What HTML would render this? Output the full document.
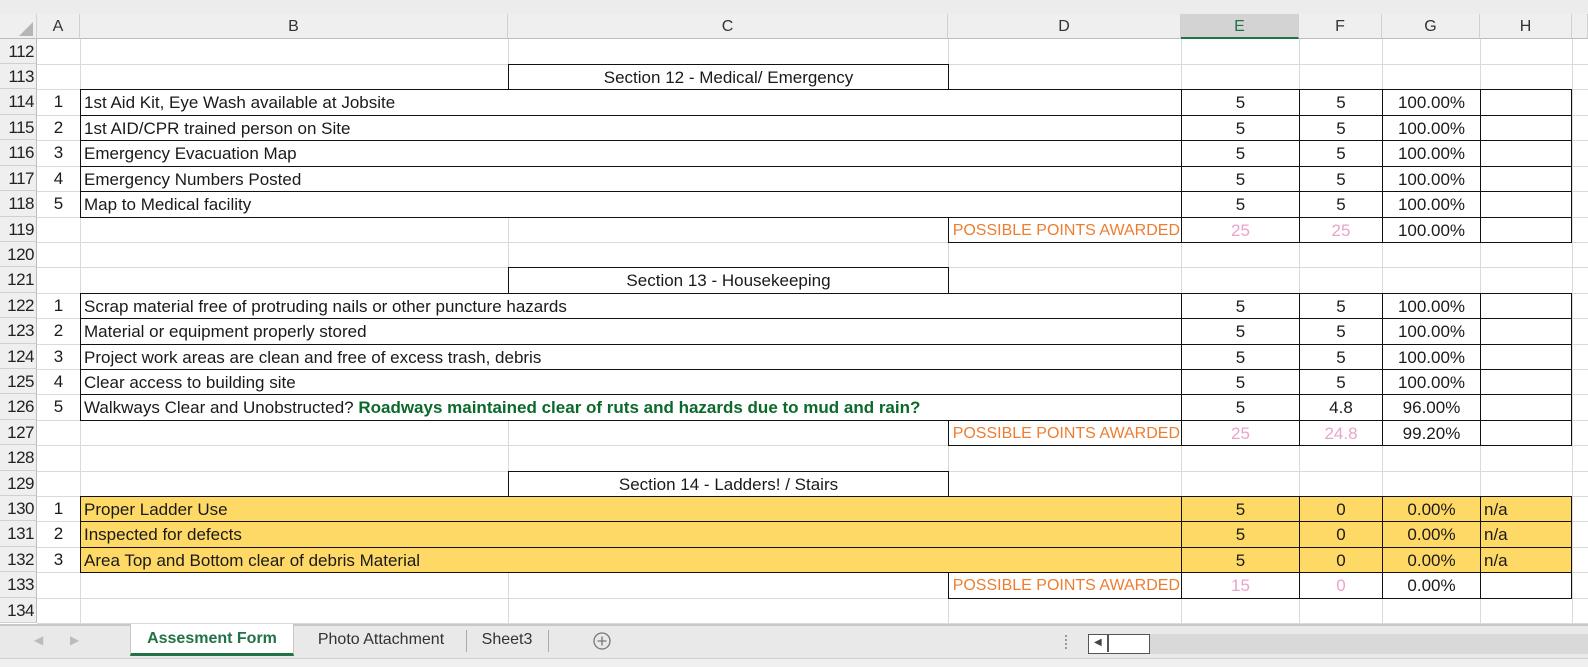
<!DOCTYPE html>
<html><head><meta charset="utf-8"><style>
*{margin:0;padding:0;box-sizing:border-box}
body{width:1588px;height:667px;overflow:hidden;background:#fff;font-family:"Liberation Sans",Arial,sans-serif;position:relative;color:#1a1a1a}
.top{position:absolute;left:0;top:0;width:1588px;height:14px;background:#ececec}
.hdr{position:absolute;top:14px;height:25px;background:#efefef;border-right:1px solid #d0d0d0;border-bottom:1px solid #bdbdbd;text-align:center;font-size:16px;line-height:25px;color:#333}
.rh{position:absolute;left:0;width:37px;background:#efefef;border-right:1px solid #bdbdbd;border-bottom:1px solid #d0d0d0;font-size:17px;line-height:26px;text-align:right;padding-right:2px;color:#222;letter-spacing:-0.5px}
.gl{position:absolute;top:39px;height:584px;width:1px;background:#dadada}
.hl{position:absolute;left:37px;width:1551px;height:1px;background:#dadada}
.c{position:absolute;font-size:17px;line-height:26px;white-space:nowrap;overflow:hidden}
.b{border:1.5px solid #111;background:#fff}
.ctr{text-align:center}
.or{color:#ed7d31;text-align:right;padding-right:1px;font-size:16px}
.pk{color:#eba3c9;text-align:center}
.y{background:#ffd966}
.g{color:#0b6a2a;font-weight:bold}
.tabbar{position:absolute;left:0;top:624px;width:1588px;height:34px;background:#e9e9e9;border-top:2px solid #c8c8c8}
.bot{position:absolute;left:0;top:658px;width:1588px;height:9px;background:#f0f0f0;border-top:1px solid #d0d0d0}
</style></head><body>
<div class="top"></div>
<div class="hdr" style="left:0;width:37px"><svg width="14" height="14" style="position:absolute;left:19px;top:8px"><polygon points="14,0 14,14 0,14" fill="#b5b5b5"/></svg></div>
<div class="hdr" style="left:37px;width:43px">A</div>
<div class="hdr" style="left:80px;width:428px">B</div>
<div class="hdr" style="left:508px;width:440px">C</div>
<div class="hdr" style="left:948px;width:233px">D</div>
<div class="hdr" style="left:1181px;width:118px;background:#d3d3d3;border-bottom:2px solid #217346;color:#217346">E</div>
<div class="hdr" style="left:1299px;width:83px">F</div>
<div class="hdr" style="left:1382px;width:98px">G</div>
<div class="hdr" style="left:1480px;width:92px">H</div>
<div class="hdr" style="left:1572px;width:16px"></div>

<div class="gl" style="left:80px"></div><div class="gl" style="left:508px"></div><div class="gl" style="left:948px"></div><div class="gl" style="left:1181px"></div><div class="gl" style="left:1299px"></div><div class="gl" style="left:1382px"></div><div class="gl" style="left:1480px"></div><div class="gl" style="left:1572px"></div>
<div class="hl" style="top:64px"></div><div class="hl" style="top:89px"></div><div class="hl" style="top:115px"></div><div class="hl" style="top:140px"></div><div class="hl" style="top:166px"></div><div class="hl" style="top:191px"></div><div class="hl" style="top:217px"></div><div class="hl" style="top:242px"></div><div class="hl" style="top:267px"></div><div class="hl" style="top:293px"></div><div class="hl" style="top:318px"></div><div class="hl" style="top:344px"></div><div class="hl" style="top:369px"></div><div class="hl" style="top:394px"></div><div class="hl" style="top:420px"></div><div class="hl" style="top:445px"></div><div class="hl" style="top:471px"></div><div class="hl" style="top:496px"></div><div class="hl" style="top:521px"></div><div class="hl" style="top:547px"></div><div class="hl" style="top:572px"></div><div class="hl" style="top:598px"></div><div class="hl" style="top:623px"></div>

<div class="rh" style="top:39px;height:25px">112</div>
<div class="rh" style="top:64px;height:25px">113</div>
<div class="rh" style="top:89px;height:26px">114</div>
<div class="rh" style="top:115px;height:25px">115</div>
<div class="rh" style="top:140px;height:26px">116</div>
<div class="rh" style="top:166px;height:25px">117</div>
<div class="rh" style="top:191px;height:26px">118</div>
<div class="rh" style="top:217px;height:25px">119</div>
<div class="rh" style="top:242px;height:25px">120</div>
<div class="rh" style="top:267px;height:26px">121</div>
<div class="rh" style="top:293px;height:25px">122</div>
<div class="rh" style="top:318px;height:26px">123</div>
<div class="rh" style="top:344px;height:25px">124</div>
<div class="rh" style="top:369px;height:25px">125</div>
<div class="rh" style="top:394px;height:26px">126</div>
<div class="rh" style="top:420px;height:25px">127</div>
<div class="rh" style="top:445px;height:26px">128</div>
<div class="rh" style="top:471px;height:25px">129</div>
<div class="rh" style="top:496px;height:25px">130</div>
<div class="rh" style="top:521px;height:26px">131</div>
<div class="rh" style="top:547px;height:25px">132</div>
<div class="rh" style="top:572px;height:26px">133</div>
<div class="rh" style="top:598px;height:25px">134</div>

<div class="c b ctr" style="left:508px;top:64px;width:441px;height:26px">Section 12 - Medical/ Emergency</div>

<div class="c ctr" style="left:37px;top:89px;width:43px;height:26px">1</div>
<div class="c b" style="left:80px;top:89px;width:1102px;height:27px;padding-left:3px">1st Aid Kit, Eye Wash available at Jobsite</div>
<div class="c ctr" style="left:37px;top:115px;width:43px;height:25px">2</div>
<div class="c b" style="left:80px;top:115px;width:1102px;height:26px;padding-left:3px">1st AID/CPR trained person on Site</div>
<div class="c ctr" style="left:37px;top:140px;width:43px;height:26px">3</div>
<div class="c b" style="left:80px;top:140px;width:1102px;height:27px;padding-left:3px">Emergency Evacuation Map</div>
<div class="c ctr" style="left:37px;top:166px;width:43px;height:25px">4</div>
<div class="c b" style="left:80px;top:166px;width:1102px;height:26px;padding-left:3px">Emergency Numbers Posted</div>
<div class="c ctr" style="left:37px;top:191px;width:43px;height:26px">5</div>
<div class="c b" style="left:80px;top:191px;width:1102px;height:27px;padding-left:3px">Map to Medical facility</div>

<div class="c b ctr" style="left:1181px;top:89px;width:119px;height:27px">5</div><div class="c b ctr" style="left:1299px;top:89px;width:84px;height:27px">5</div><div class="c b ctr" style="left:1382px;top:89px;width:99px;height:27px">100.00%</div><div class="c b" style="left:1480px;top:89px;width:92px;height:27px"></div>
<div class="c b ctr" style="left:1181px;top:115px;width:119px;height:26px">5</div><div class="c b ctr" style="left:1299px;top:115px;width:84px;height:26px">5</div><div class="c b ctr" style="left:1382px;top:115px;width:99px;height:26px">100.00%</div><div class="c b" style="left:1480px;top:115px;width:92px;height:26px"></div>
<div class="c b ctr" style="left:1181px;top:140px;width:119px;height:27px">5</div><div class="c b ctr" style="left:1299px;top:140px;width:84px;height:27px">5</div><div class="c b ctr" style="left:1382px;top:140px;width:99px;height:27px">100.00%</div><div class="c b" style="left:1480px;top:140px;width:92px;height:27px"></div>
<div class="c b ctr" style="left:1181px;top:166px;width:119px;height:26px">5</div><div class="c b ctr" style="left:1299px;top:166px;width:84px;height:26px">5</div><div class="c b ctr" style="left:1382px;top:166px;width:99px;height:26px">100.00%</div><div class="c b" style="left:1480px;top:166px;width:92px;height:26px"></div>
<div class="c b ctr" style="left:1181px;top:191px;width:119px;height:27px">5</div><div class="c b ctr" style="left:1299px;top:191px;width:84px;height:27px">5</div><div class="c b ctr" style="left:1382px;top:191px;width:99px;height:27px">100.00%</div><div class="c b" style="left:1480px;top:191px;width:92px;height:27px"></div>

<div class="c b or" style="left:948px;top:217px;width:234px;height:26px">POSSIBLE POINTS AWARDED</div>
<div class="c b pk" style="left:1181px;top:217px;width:119px;height:26px">25</div><div class="c b pk" style="left:1299px;top:217px;width:84px;height:26px">25</div><div class="c b ctr" style="left:1382px;top:217px;width:99px;height:26px">100.00%</div><div class="c b" style="left:1480px;top:217px;width:92px;height:26px"></div>

<div class="c b ctr" style="left:508px;top:267px;width:441px;height:27px">Section 13 - Housekeeping</div>

<div class="c ctr" style="left:37px;top:293px;width:43px;height:25px">1</div>
<div class="c b" style="left:80px;top:293px;width:1102px;height:26px;padding-left:3px">Scrap material free of protruding nails or other puncture hazards</div>
<div class="c ctr" style="left:37px;top:318px;width:43px;height:26px">2</div>
<div class="c b" style="left:80px;top:318px;width:1102px;height:27px;padding-left:3px">Material or equipment properly stored</div>
<div class="c ctr" style="left:37px;top:344px;width:43px;height:25px">3</div>
<div class="c b" style="left:80px;top:344px;width:1102px;height:26px;padding-left:3px">Project work areas are clean and free of excess trash, debris</div>
<div class="c ctr" style="left:37px;top:369px;width:43px;height:25px">4</div>
<div class="c b" style="left:80px;top:369px;width:1102px;height:26px;padding-left:3px">Clear access to building site</div>
<div class="c ctr" style="left:37px;top:394px;width:43px;height:26px">5</div>
<div class="c b" style="left:80px;top:394px;width:1102px;height:27px;padding-left:3px">Walkways Clear and Unobstructed? <span class="g">Roadways maintained clear of ruts and hazards due to mud and rain?</span></div>

<div class="c b ctr" style="left:1181px;top:293px;width:119px;height:26px">5</div><div class="c b ctr" style="left:1299px;top:293px;width:84px;height:26px">5</div><div class="c b ctr" style="left:1382px;top:293px;width:99px;height:26px">100.00%</div><div class="c b" style="left:1480px;top:293px;width:92px;height:26px"></div>
<div class="c b ctr" style="left:1181px;top:318px;width:119px;height:27px">5</div><div class="c b ctr" style="left:1299px;top:318px;width:84px;height:27px">5</div><div class="c b ctr" style="left:1382px;top:318px;width:99px;height:27px">100.00%</div><div class="c b" style="left:1480px;top:318px;width:92px;height:27px"></div>
<div class="c b ctr" style="left:1181px;top:344px;width:119px;height:26px">5</div><div class="c b ctr" style="left:1299px;top:344px;width:84px;height:26px">5</div><div class="c b ctr" style="left:1382px;top:344px;width:99px;height:26px">100.00%</div><div class="c b" style="left:1480px;top:344px;width:92px;height:26px"></div>
<div class="c b ctr" style="left:1181px;top:369px;width:119px;height:26px">5</div><div class="c b ctr" style="left:1299px;top:369px;width:84px;height:26px">5</div><div class="c b ctr" style="left:1382px;top:369px;width:99px;height:26px">100.00%</div><div class="c b" style="left:1480px;top:369px;width:92px;height:26px"></div>
<div class="c b ctr" style="left:1181px;top:394px;width:119px;height:27px">5</div><div class="c b ctr" style="left:1299px;top:394px;width:84px;height:27px">4.8</div><div class="c b ctr" style="left:1382px;top:394px;width:99px;height:27px">96.00%</div><div class="c b" style="left:1480px;top:394px;width:92px;height:27px"></div>

<div class="c b or" style="left:948px;top:420px;width:234px;height:26px">POSSIBLE POINTS AWARDED</div>
<div class="c b pk" style="left:1181px;top:420px;width:119px;height:26px">25</div><div class="c b pk" style="left:1299px;top:420px;width:84px;height:26px">24.8</div><div class="c b ctr" style="left:1382px;top:420px;width:99px;height:26px">99.20%</div><div class="c b" style="left:1480px;top:420px;width:92px;height:26px"></div>

<div class="c b ctr" style="left:508px;top:471px;width:441px;height:26px">Section 14 - Ladders! / Stairs</div>

<div class="c ctr" style="left:37px;top:496px;width:43px;height:25px">1</div>
<div class="c b y" style="left:80px;top:496px;width:1102px;height:26px;padding-left:3px">Proper Ladder Use</div>
<div class="c ctr" style="left:37px;top:521px;width:43px;height:26px">2</div>
<div class="c b y" style="left:80px;top:521px;width:1102px;height:27px;padding-left:3px">Inspected for defects</div>
<div class="c ctr" style="left:37px;top:547px;width:43px;height:25px">3</div>
<div class="c b y" style="left:80px;top:547px;width:1102px;height:26px;padding-left:3px">Area Top and Bottom clear of debris Material</div>

<div class="c b ctr y" style="left:1181px;top:496px;width:119px;height:26px">5</div><div class="c b ctr y" style="left:1299px;top:496px;width:84px;height:26px">0</div><div class="c b ctr y" style="left:1382px;top:496px;width:99px;height:26px">0.00%</div><div class="c b y" style="left:1480px;top:496px;width:92px;height:26px;padding-left:3px">n/a</div>
<div class="c b ctr y" style="left:1181px;top:521px;width:119px;height:27px">5</div><div class="c b ctr y" style="left:1299px;top:521px;width:84px;height:27px">0</div><div class="c b ctr y" style="left:1382px;top:521px;width:99px;height:27px">0.00%</div><div class="c b y" style="left:1480px;top:521px;width:92px;height:27px;padding-left:3px">n/a</div>
<div class="c b ctr y" style="left:1181px;top:547px;width:119px;height:26px">5</div><div class="c b ctr y" style="left:1299px;top:547px;width:84px;height:26px">0</div><div class="c b ctr y" style="left:1382px;top:547px;width:99px;height:26px">0.00%</div><div class="c b y" style="left:1480px;top:547px;width:92px;height:26px;padding-left:3px">n/a</div>

<div class="c b or" style="left:948px;top:572px;width:234px;height:27px">POSSIBLE POINTS AWARDED</div>
<div class="c b pk" style="left:1181px;top:572px;width:119px;height:27px">15</div><div class="c b pk" style="left:1299px;top:572px;width:84px;height:27px">0</div><div class="c b ctr" style="left:1382px;top:572px;width:99px;height:27px">0.00%</div><div class="c b" style="left:1480px;top:572px;width:92px;height:27px"></div>

<div class="tabbar">
 <span style="position:absolute;left:34px;top:7px;color:#bbb;font-size:12px">&#9664;</span>
 <span style="position:absolute;left:70px;top:7px;color:#bbb;font-size:12px">&#9654;</span>
 <div style="position:absolute;left:130px;top:-2px;width:164px;height:32px;background:#fff;border-left:1px solid #c8c8c8;border-right:1px solid #c8c8c8;border-bottom:3px solid #217346;color:#217346;font-weight:bold;font-size:16px;text-align:center;line-height:30px">Assesment Form</div>
 <div style="position:absolute;left:296px;top:0;width:170px;height:30px;font-size:16px;text-align:center;line-height:28px;color:#333">Photo Attachment</div>
 <div style="position:absolute;left:466px;top:4px;width:1px;height:22px;background:#aaa"></div>
 <div style="position:absolute;left:467px;top:0;width:80px;height:30px;font-size:16px;text-align:center;line-height:28px;color:#333">Sheet3</div>
 <div style="position:absolute;left:548px;top:4px;width:1px;height:22px;background:#aaa"></div>
 <svg style="position:absolute;left:592px;top:5px" width="20" height="20"><circle cx="10" cy="10" r="8" fill="none" stroke="#777" stroke-width="1.3"/><path d="M10 5.5V14.5M5.5 10H14.5" stroke="#777" stroke-width="1.3"/></svg>
 <div style="position:absolute;left:1065px;top:9px;width:2px;height:14px;border-left:2px dotted #999"></div>
 <div style="position:absolute;left:1088px;top:8px;width:62px;height:20px;background:#fff;border:1.5px solid #555"><div style="position:absolute;left:18px;top:0;width:1.5px;height:17px;background:#555"></div><span style="position:absolute;left:5px;top:2px;font-size:10px;color:#444">&#9664;</span></div>
 <div style="position:absolute;left:1150px;top:8px;width:438px;height:20px;background:#d9d9d9"></div>
</div>
<div class="bot"></div>
</body></html>
